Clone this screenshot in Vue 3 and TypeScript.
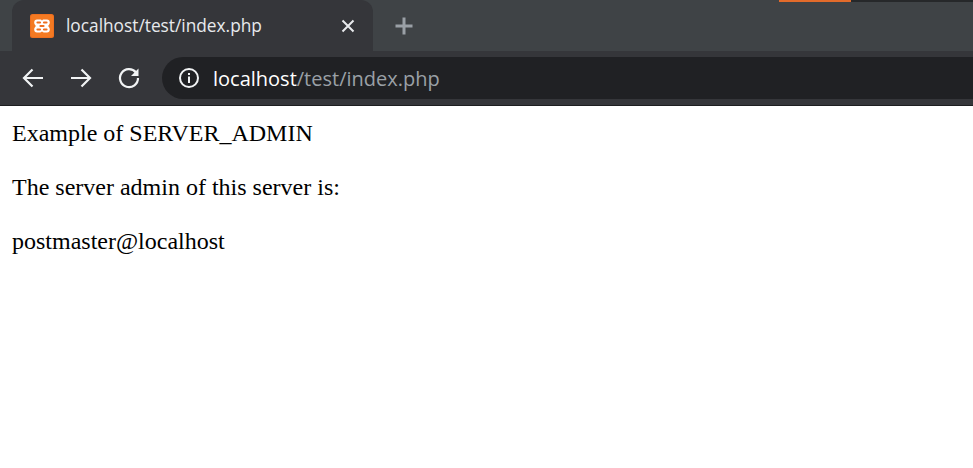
<script setup lang="ts">
const host = 'localhost'
const path = '/test/index.php'
const lines: string[] = ['Example of SERVER_ADMIN', 'The server admin of this server is:', 'postmaster@localhost']
</script>

<template>
  <div class="page">
    <header class="chrome">
      <div class="tabstrip">
        <div class="accent"><span class="accent-orange"></span><span class="accent-dark"></span></div>
        <div class="tab">
          <svg class="favicon" width="24" height="24" viewBox="0 0 24 24">
            <rect x="0" y="0" width="24" height="24" rx="2.5" fill="#ee6f1f" />
            <rect x="1" y="1" width="22" height="22" rx="2" fill="#f47a22" />
            <path d="M7 5.5h3.2c1 0 1.4.5 1.8 1.2.4-.7.8-1.2 1.8-1.2H17c1.8 0 2.8 1.3 2.8 3 0 1.300-.6 2.500-1.800 3.500 1.200 1 1.800 2.200 1.800 3.500 0 1.700-1 3-2.800 3h-3.200c-1 0-1.400-.5-1.800-1.200-.4.7-.8 1.200-1.800 1.200H7c-1.800 0-2.800-1.300-2.800-3 0-1.300.6-2.500 1.800-3.500-1.200-1-1.800-2.200-1.800-3.500 0-1.700 1-3 2.800-3z" fill="#fff" />
            <path d="M7.500 8.500h2.500M7.500 15.500h2.500M14 8.500h2.500M14 15.500h2.500M10.500 12h3" stroke="#ee6f1f" stroke-width="2.200" stroke-linecap="round" fill="none" />
          </svg>
          <span class="tab-title">{{ host + path }}</span>
          <svg class="close" width="14" height="14" viewBox="0 0 14 14">
            <path d="M1.500 1.500l11 11M12.500 1.500l-11 11" stroke="#e8eaed" stroke-width="2" fill="none" />
          </svg>
        </div>
        <svg class="plus" width="18" height="18" viewBox="0 0 18 18">
          <path d="M9 0.500v17M0.500 9h17" stroke="#9aa0a6" stroke-width="3" fill="none" />
        </svg>
      </div>
      <div class="toolbar">
        <div class="nav">
          <svg width="24" height="24" viewBox="0 0 24 24">
            <path d="M22 12H3M11.500 3.500L3 12l8.500 8.500" stroke="#f1f3f4" stroke-width="2.200" fill="none" />
          </svg>
          <svg width="24" height="24" viewBox="0 0 24 24">
            <path d="M2 12h19M12.500 3.500L21 12l-8.500 8.500" stroke="#f1f3f4" stroke-width="2.200" fill="none" />
          </svg>
          <svg width="24" height="24" viewBox="0 0 24 24">
            <path d="M19 6.500A9 9 0 1 0 21 12" stroke="#f1f3f4" stroke-width="2.200" fill="none" />
            <path d="M21.500 2.500v7.500h-7.500z" fill="#f1f3f4" />
          </svg>
        </div>
        <div class="omnibox">
          <svg class="info" width="22" height="22" viewBox="0 0 22 22">
            <circle cx="11" cy="11" r="9" stroke="#f1f3f4" stroke-width="2" fill="none" />
            <rect x="10" y="9.500" width="2" height="6.500" fill="#f1f3f4" />
            <rect x="10" y="6" width="2" height="2" fill="#f1f3f4" />
          </svg>
          <span class="url"><span class="url-host">{{ host }}</span><span class="url-path">{{ path }}</span></span>
        </div>
      </div>
    </header>
    <main class="content">
      <p v-for="line in lines" :key="line">{{ line }}</p>
    </main>
  </div>
</template>

<style>
html, body { margin: 0; background: #fff; }
</style>

<style scoped>
.page { width: 973px; height: 468px; overflow: hidden; display: flex; flex-direction: column; background: #fff; }
.chrome { flex: none; background: #35363a; border-bottom: 1px solid #1d1e20; }
.tabstrip { position: relative; height: 51px; background: #3f4346; display: flex; align-items: center; padding-left: 12px; }
.accent { position: absolute; top: 0; left: 779px; right: 0; height: 2px; display: flex; }
.accent-orange { width: 72px; background: #e26b2b; }
.accent-dark { flex: 1; background: #26282a; }
.tab { width: 361px; height: 51px; box-sizing: border-box; background: #35363a; border-radius: 12px 12px 0 0; display: flex; align-items: center; padding: 0 18px; }
.favicon { flex: none; margin-right: 12px; }
.tab-title { flex: 1; color: #e8eaed; font: 17.300px "Open Sans", sans-serif; white-space: nowrap; }
.close { flex: none; margin-right: 0; }
.plus { flex: none; margin-left: 22px; }
.toolbar { height: 54px; display: flex; align-items: center; }
.nav { flex: none; width: 162px; box-sizing: border-box; padding-left: 21px; display: flex; gap: 24px; }
.omnibox { flex: 1; height: 42px; background: #202124; border-radius: 21px 0 0 21px; display: flex; align-items: center; padding-left: 16px; }
.info { flex: none; margin-right: 13px; }
.url { font: 20px "Open Sans", sans-serif; white-space: nowrap; }
.url-host { color: #fff; }
.url-path { color: #9aa0a6; }
.content { flex: 1; padding: 12px; font: 24px/30px "Liberation Serif", serif; color: #000; }
.content p { margin: 0 0 24px; }
</style>
